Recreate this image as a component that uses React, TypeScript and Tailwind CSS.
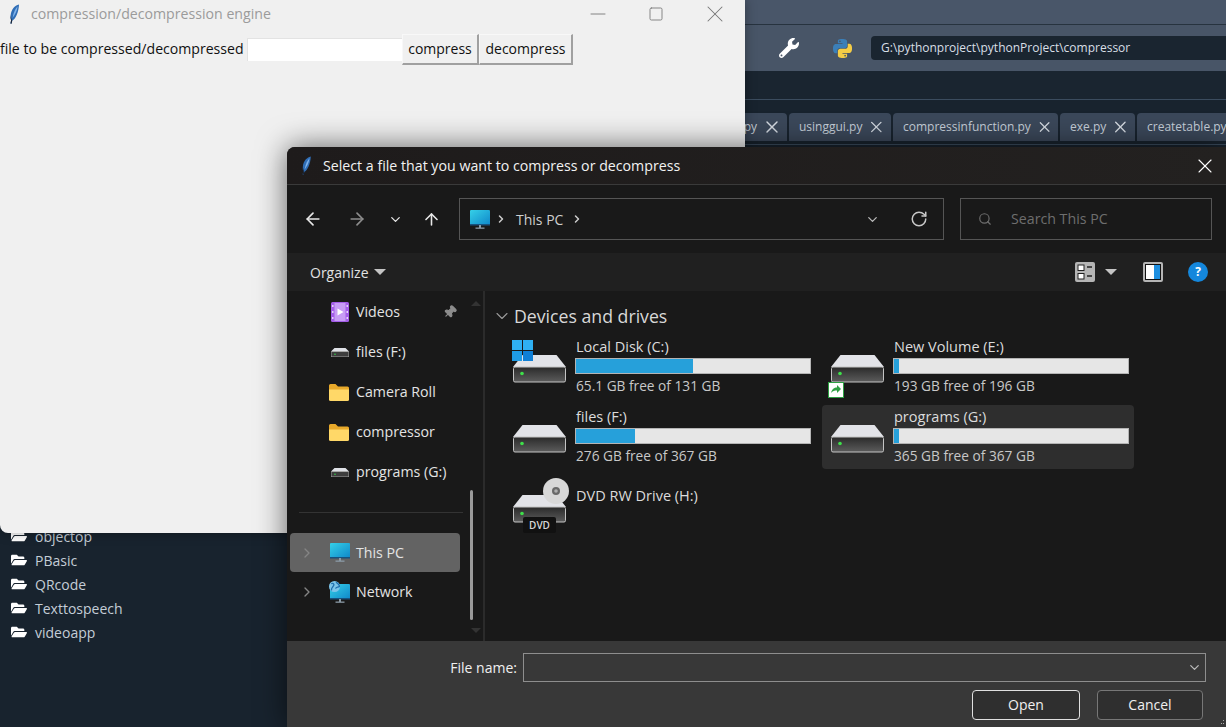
import { ArrowLeft, ArrowRight, ArrowUp, ChevronDown, ChevronRight, Minus, Pin, RotateCw, Search, Square, X } from "lucide-react";
import { FaFolderOpen, FaWrench } from "react-icons/fa";

const tabs = [
    { name: "main.py", width: "w-[147px] justify-end" },
    { name: "usinggui.py", width: "w-[102px] justify-between" },
    { name: "compressinfunction.py", width: "w-[165px] justify-between" },
    { name: "exe.py", width: "w-[75px] justify-between" },
];

const folders = ["objectop", "PBasic", "QRcode", "Texttospeech", "videoapp"];

const drives = [
    { name: "Local Disk (C:)", free: "65.1 GB free of 131 GB", used: 50, badge: "windows" },
    { name: "New Volume (E:)", free: "193 GB free of 196 GB", used: 2, badge: "share" },
    { name: "files (F:)", free: "276 GB free of 367 GB", used: 25 },
    { name: "programs (G:)", free: "365 GB free of 367 GB", used: 2, selected: true },
    { name: "DVD RW Drive (H:)", badge: "dvd" },
];

const Feather = ({ className }: { className: string }) => (
    <svg viewBox="0 0 12 22" className={className}>
        <path d="M11 0.5C6 1.5 2.5 6 1.8 12c-.3 2.500 0 4.500.5 6L1.500 21.500l1.200.3.8-3.300C7.500 16 10.500 9 11 .5z" fill="#2f6db5" />
        <path d="M9.500 2.500C7 5 5 9 3.800 15.500 6.500 12 8.800 8 9.500 2.500z" fill="#7fb2ea" />
        <path d="M1.800 12c-.3 2.500 0 4.500.5 6l-.8 3.500 1.200.3.8-3.300c-1-2-1.500-4-1.700-6.500z" fill="#1b2230" />
    </svg>
);

const PythonLogo = () => (
    <svg viewBox="0 0 24 24" className="w-[19px] h-[19px]">
        <path fill="#3b7fb8" d="M14.25.18l.9.2.73.26.59.3.45.32.34.34.25.34.16.33.1.3.04.26.02.2-.01.13V8.5l-.05.63-.13.55-.21.46-.26.38-.3.31-.33.25-.35.19-.35.14-.33.1-.3.07-.26.04-.21.02H8.77l-.69.05-.59.14-.5.22-.41.27-.33.32-.27.35-.2.36-.15.37-.1.35-.07.32-.04.27-.02.21v3.06H3.17l-.21-.03-.28-.07-.32-.12-.35-.18-.36-.26-.36-.36-.35-.46-.32-.59-.28-.73-.21-.88-.14-1.05-.05-1.23.06-1.22.16-1.04.24-.87.32-.71.36-.57.4-.44.42-.33.42-.24.4-.16.36-.1.32-.05.24-.01h.16l.06.01h8.16v-.83H6.18l-.01-2.75-.02-.37.05-.34.11-.31.17-.28.25-.26.31-.23.38-.2.44-.18.51-.15.58-.12.64-.1.71-.06.77-.04.84-.02 1.27.05zm-6.3 1.98l-.23.33-.08.41.08.41.23.34.33.22.41.09.41-.09.33-.22.23-.34.08-.41-.08-.41-.23-.33-.33-.22-.41-.09-.41.09z" />
        <path fill="#f5cd46" d="M21.04 6.11l.28.06.32.12.35.18.36.27.36.35.35.47.32.59.28.73.21.88.14 1.04.05 1.23-.06 1.23-.16 1.04-.24.86-.32.71-.36.57-.4.45-.42.33-.42.24-.4.16-.36.09-.32.05-.24.02-.16-.01h-8.22v.82h5.84l.01 2.76.02.36-.05.34-.11.31-.17.29-.25.25-.31.24-.38.2-.44.17-.51.15-.58.13-.64.09-.71.07-.77.04-.84.01-1.27-.04-1.07-.14-.9-.2-.73-.25-.59-.3-.45-.33-.34-.34-.25-.34-.16-.33-.1-.3-.04-.25-.02-.2.01-.13v-5.34l.05-.64.13-.54.21-.46.26-.38.3-.32.33-.24.35-.2.35-.14.33-.1.3-.06.26-.04.21-.02.13-.01h5.84l.69-.05.59-.14.5-.21.41-.28.33-.32.27-.35.2-.36.15-.36.1-.35.07-.32.04-.28.02-.21V6.07h2.09l.14.01zm-6.47 14.25l-.23.33-.08.41.08.41.23.33.33.23.41.08.41-.08.33-.23.23-.33.08-.41-.08-.41-.23-.33-.33-.23-.41-.08-.41.08z" />
    </svg>
);

const Monitor = ({ className }: { className: string }) => (
    <svg viewBox="0 0 20 19" className={className}>
        <defs>
            <linearGradient id="screen" x1="0" y1="0" x2="1" y2="1">
                <stop offset="0" stopColor="#35d0e8" />
                <stop offset="1" stopColor="#0f87c9" />
            </linearGradient>
        </defs>
        <rect x="0" y="0" width="20" height="15" rx="1" fill="url(#screen)" />
        <rect x="0" y="14" width="20" height="1.500" fill="#17527f" />
        <rect x="9" y="15" width="2" height="3" fill="#8a9aa6" />
        <rect x="5.500" y="17.500" width="9" height="1.300" fill="#8a9aa6" />
    </svg>
);

const SmallDrive = () => (
    <svg viewBox="0 0 18 9" className="w-[18px] h-[9px]">
        <path d="M3.500 0h11L18 3.500H0z" fill="#dfe1e6" />
        <rect x="0" y="3.500" width="18" height="5.500" rx="1" fill="#3d3d3d" stroke="#c8c8c8" strokeWidth=".7" />
        <circle cx="4" cy="6.200" r=".8" fill="#35d04a" />
    </svg>
);

const Folder = () => (
    <svg viewBox="0 0 20 17" className="w-5 h-[17px]">
        <path d="M0 1.500A1.500 1.500 0 0 1 1.500 0h5L9 2.500h9.500A1.500 1.500 0 0 1 20 4v3H0z" fill="#e8a92a" />
        <path d="M0 5.500h20v10a1.500 1.500 0 0 1-1.500 1.500h-17A1.500 1.500 0 0 1 0 15.500z" fill="#ffd868" />
    </svg>
);

const VideosIcon = () => (
    <svg viewBox="0 0 18 20" className="w-[18px] h-5">
        <rect width="18" height="20" rx="1.500" fill="#a45ee8" />
        <rect x="3.500" y="1" width="11" height="18" fill="#c79cf5" />
        <path d="M6.500 6.500l6 3.500-6 3.500z" fill="#fff" />
        <g fill="#e6d5fa">
            <rect x="1" y="3" width="1.500" height="2" />
            <rect x="1" y="9" width="1.500" height="2" />
            <rect x="1" y="15" width="1.500" height="2" />
            <rect x="15.500" y="3" width="1.500" height="2" />
            <rect x="15.500" y="9" width="1.500" height="2" />
            <rect x="15.500" y="15" width="1.500" height="2" />
        </g>
    </svg>
);

const NetworkIcon = () => (
    <div className="relative w-5 h-5 -ml-px">
        <Monitor className="absolute left-0 top-[2px] w-5 h-[19px]" />
        <svg viewBox="0 0 10 10" className="absolute left-[-1px] top-[-1px] w-[11px] h-[11px]">
            <circle cx="5" cy="5" r="5" fill="#7cc4ea" />
            <path d="M2 2.500c2-1 3 .5 2 2S1.500 7 2.500 8.500M6.500 1c1 1.500 3 2 3 4-1.500 1-3 0-3.500 2" fill="none" stroke="#1f6fae" strokeWidth="1.200" />
        </svg>
    </div>
);

const DriveIcon = ({ badge, id }: { badge?: string; id: number }) => (
    <svg viewBox="0 0 60 64" className="w-[60px] h-16 shrink-0">
        <defs>
            <linearGradient id={`body${id}`} x1="0" y1="0" x2="0" y2="1">
                <stop offset="0" stopColor="#2a2a2a" />
                <stop offset="1" stopColor="#5c5c5c" />
            </linearGradient>
        </defs>
        <path d="M12.500 20h34L56 32H3z" fill="#e2e3e8" />
        <rect x="3.500" y="32" width="52" height="15" rx="1.500" fill={`url(#body${id})`} stroke="#c4c4c4" />
        <circle cx="12" cy="38.500" r="1.800" fill="#3ee04a" />
        {badge === "windows" && (
            <g fill="#1e9be6">
                <rect x="2" y="5" width="10" height="10" fill="#2fb0f2" />
                <rect x="13" y="5" width="10" height="10" fill="#2fb0f2" />
                <rect x="2" y="16" width="10" height="10" />
                <rect x="13" y="16" width="10" height="10" fill="#0f7fd6" />
            </g>
        )}
        {badge === "share" && (
            <g>
                <rect x="0.500" y="47.500" width="15" height="15" fill="#fff" stroke="#2ea043" />
                <path d="M3 58c1-4 3-5.500 6-5.500V50l4 4-4 4v-2.500c-2.500 0-4.500.5-6 2.500z" fill="#2ea043" />
            </g>
        )}
        {badge === "dvd" && (
            <g>
                <circle cx="46" cy="16" r="13" fill="#d8d8d8" />
                <circle cx="46" cy="16" r="4" fill="#6a6a6a" />
                <circle cx="46" cy="16" r="1.800" fill="#b0b0b0" />
                <rect x="13" y="42" width="33" height="16" rx="2" fill="#111" />
                <text x="29.500" y="53.500" textAnchor="middle" fontSize="10" fontFamily="Open Sans, sans-serif" fontWeight="600" fill="#d8d8d8">DVD</text>
            </g>
        )}
    </svg>
);

const SideRow = ({ label, icon, pin, chevron, active }: { label: string; icon: React.ReactNode; pin?: boolean; chevron?: boolean; active?: boolean }) => (
    <div className={`flex items-center w-[170px] rounded-sm ${active ? "bg-[#636363] h-[39px]" : "h-10"}`}>
        <div className="w-[40px] shrink-0 flex justify-end pr-[15px]">
            {chevron && <ChevronRight size={16} className="text-[#858585]" />}
        </div>
        <div className="w-[26px] shrink-0 flex pl-px">{icon}</div>
        <span className="text-[14.2px] text-[#e4e4e4]">{label}</span>
        {pin && <Pin size={14} className="ml-auto mr-[3px] text-[#8d8d8d] rotate-45 fill-[#8d8d8d]" />}
    </div>
);

export default function App() {
    return (
        <div className="relative w-[1226px] h-[727px] overflow-hidden bg-[#18232e] font-['Open_Sans',sans-serif]">
            {/* IDE behind the windows */}
            <div className="flex flex-col">
                <div className="h-6 bg-[#495669] border-b border-[#27333f] box-content" />
                <div className="h-[46px] bg-[#485567] flex items-center pl-[779px]">
                    <FaWrench size={20} className="text-white" />
                    <div className="ml-[34px]"><PythonLogo /></div>
                    <div className="ml-[19px] flex-1 h-6 bg-[#1a2530] rounded-l flex items-center pl-[10px] text-[12px] text-[#d8dfe6]">
                        G:\pythonproject\pythonProject\compressor
                    </div>
                </div>
                <div className="h-[28px] bg-[#1a2530] border-b border-[#3b4c5e] box-content" />
                <div className="pt-[13px] flex gap-[2px] pl-[640px] whitespace-nowrap">
                    {tabs.map((t) => (
                        <div key={t.name} className={`h-7 rounded-t bg-[#3b485a] flex items-center gap-[5px] pl-[10px] pr-[5px] text-[12px] text-[#c6cfd9] shrink-0 ${t.width}`}>
                            <span>{t.name}</span>
                            <X size={20} strokeWidth={1.700} className="text-[#d5dbe2]" />
                        </div>
                    ))}
                    <div className="h-7 rounded-t bg-[#3b485a] flex items-center pl-[10px] text-[12px] text-[#c6cfd9] w-[120px] shrink-0">createtable.py</div>
                </div>
                <div className="mt-[3px] h-px bg-[#3b4c5e]" />
                <div className="pt-[379px] pl-[11px]">
                    {folders.map((f) => (
                        <div key={f} className="h-6 flex items-center gap-2 text-[14px] text-[#c4cdd7]">
                            <FaFolderOpen size={16} className="text-white" />
                            <span>{f}</span>
                        </div>
                    ))}
                </div>
            </div>

            {/* tkinter window */}
            <div className="absolute left-0 top-0 w-[745px] h-[533px] bg-[#f0f0f0] rounded-bl-lg shadow-[0_0_12px_rgba(0,0,0,0.35)]">
                <div className="h-[28px] flex items-center">
                    <Feather className="ml-[9px] w-[11px] h-5" />
                    <span className="ml-[11px] -mt-px text-[14.15px] text-[#9b9b9b]">compression/decompression engine</span>
                    <Minus size={24} strokeWidth={0.900} className="ml-auto text-[#777]" />
                    <Square size={16} strokeWidth={1.300} className="ml-[38px] text-[#777]" />
                    <X size={28} strokeWidth={0.900} className="ml-[37px] mr-[16px] text-[#777]" />
                </div>
                <div className="mt-[6px] flex items-center whitespace-nowrap text-[14px] text-[#111]">
                    <span className="w-[247px] -mt-px text-[14.1px]">file to be compressed/decompressed</span>
                    <div className="w-[155px] h-[23px] bg-white border-t border-l border-[#e3e3e3]" />
                    <button className="w-[77px] h-[31px] pb-px bg-[#f0f0f0] border border-[#f8f8f8] border-r-2 border-b-2 border-r-[#a0a0a0] border-b-[#a0a0a0]">compress</button>
                    <button className="w-[94px] h-[31px] pb-px bg-[#f0f0f0] border border-[#f8f8f8] border-r-2 border-b-2 border-r-[#a0a0a0] border-b-[#a0a0a0]">decompress</button>
                </div>
            </div>

            {/* file picker dialog */}
            <div className="absolute left-[287px] top-[147px] w-[939px] h-[580px] rounded-tl-lg overflow-hidden bg-[#191919] flex flex-col shadow-[0_0_30px_rgba(0,0,0,0.6)]">
                <div className="h-[38px] shrink-0 bg-gradient-to-r from-[#1e1b1b] to-[#232120] border-b border-[#3a3a3a] flex items-center pl-[14px] pr-[9px]">
                    <Feather className="w-[11px] h-[19px]" />
                    <span className="ml-[11px] text-[14.2px] text-[#f2f2f2]">Select a file that you want to compress or decompress</span>
                    <X size={24} strokeWidth={1.100} className="ml-auto text-white" />
                </div>

                <div className="h-[68px] shrink-0 flex items-center text-[#e8e8e8]">
                    <ArrowLeft size={20} className="ml-[16px]" />
                    <ArrowRight size={20} className="ml-[24px] text-[#8d8d8d]" />
                    <ChevronDown size={15} className="ml-[21px]" />
                    <ArrowUp size={19} className="ml-[19px]" />
                    <div className="ml-[18px] w-[485px] h-[42px] border border-[#555] flex items-center pl-[10px]">
                        <Monitor className="w-5 h-[19px]" />
                        <ChevronRight size={12} strokeWidth={3} className="ml-[5px] text-[#ccc]" />
                        <span className="ml-[9px] text-[14px] text-[#cfcfcf]">This PC</span>
                        <ChevronRight size={12} strokeWidth={3} className="ml-[8px] text-[#ccc]" />
                        <ChevronDown size={15} className="ml-auto text-[#bbb]" />
                        <RotateCw size={18} className="ml-[30px] mr-[15px] text-[#c8c8c8]" />
                    </div>
                    <div className="ml-[16px] w-[252px] h-[42px] border border-[#555] flex items-center pl-[17px]">
                        <Search size={14} className="text-[#6e6e6e]" />
                        <span className="ml-[19px] text-[14.2px] text-[#6e6e6e]">Search This PC</span>
                    </div>
                </div>

                <div className="h-[38px] shrink-0 bg-[#202020] flex items-center pl-[23px] pr-[18px]">
                    <span className="text-[14px] text-[#e2e2e2]">Organize</span>
                    <svg viewBox="0 0 12 6" className="ml-[5px] w-3 h-[6px]"><path d="M0 0h12L6 6z" fill="#c4c4c4" /></svg>
                    <svg viewBox="0 0 20 20" className="ml-auto w-5 h-5">
                        <rect width="20" height="20" rx="2" fill="#b5b5b5" />
                        <rect x="3" y="3" width="6" height="5.500" fill="#fff" stroke="#222" />
                        <rect x="3" y="11.500" width="6" height="5.500" fill="#fff" stroke="#222" />
                        <path d="M12 5h5M12 14h5" stroke="#222" strokeWidth="1.500" />
                    </svg>
                    <svg viewBox="0 0 12 6" className="ml-[10px] w-3 h-[6px]"><path d="M0 0h12L6 6z" fill="#c4c4c4" /></svg>
                    <svg viewBox="0 0 20 20" className="ml-[26px] w-5 h-5">
                        <rect width="20" height="20" rx="2" fill="#b5b5b5" />
                        <rect x="2" y="2" width="16" height="16" fill="#111" />
                        <rect x="3" y="3" width="8" height="14" fill="#fff" />
                        <rect x="11" y="3" width="6" height="14" fill="#1e8fe0" />
                    </svg>
                    <div className="ml-[25px] w-5 h-5 rounded-full bg-[#1487dc] text-white text-[12px] font-bold flex items-center justify-center">?</div>
                </div>

                <div className="flex-1 flex min-h-0">
                    <div className="relative w-[198px] shrink-0 border-r-2 border-[#2b2b2b] pl-[3px] pt-px">
                        <SideRow label="Videos" icon={<VideosIcon />} pin />
                        <SideRow label="files (F:)" icon={<SmallDrive />} />
                        <SideRow label="Camera Roll" icon={<div className="-ml-[2px]"><Folder /></div>} />
                        <SideRow label="compressor" icon={<div className="-ml-[2px]"><Folder /></div>} />
                        <SideRow label="programs (G:)" icon={<SmallDrive />} />
                        <div className="mt-[20px] mb-[20px] ml-[9px] w-[164px] h-px bg-[#333]" />
                        <SideRow label="This PC" icon={<Monitor className="-ml-px w-5 h-[19px]" />} chevron active />
                        <SideRow label="Network" icon={<NetworkIcon />} chevron />
                        {/* scrollbar */}
                        <div className="absolute left-[184px] top-[10px] w-0 h-0 border-x-[5px] border-x-transparent border-b-[5px] border-b-[#333]" />
                        <div className="absolute left-[183px] top-[199px] w-[3px] h-[130px] rounded bg-[#9a9a9a]" />
                        <div className="absolute left-[184px] top-[337px] w-0 h-0 border-x-[5px] border-x-transparent border-t-[5px] border-t-[#333]" />
                    </div>

                    <div className="flex-1 pl-[19px] pt-[12px]">
                        <div className="flex items-center h-[26px] text-[#d8d8d8]">
                            <ChevronDown size={20} strokeWidth={1.300} className="-ml-[12px] text-[#9a9a9a]" />
                            <span className="ml-[2px] text-[17.700px]">Devices and drives</span>
                        </div>
                        <div className="mt-[6px] grid grid-cols-[312px_312px] gap-[6px]">
                            {drives.map((d, i) => (
                                <div key={d.name} className={`relative h-16 flex pl-[6px] rounded-sm ${d.selected ? "bg-[#2e2e2e]" : ""}`}>
                                    <DriveIcon badge={d.badge} id={i} />
                                    <div className={`ml-[5px] text-[#dcdcdc] leading-[19px] ${d.free ? "pt-[2px]" : "pt-[11px]"}`}>
                                        <div className="ml-px text-[14.500px]">{d.name}</div>
                                        {d.free && (
                                            <>
                                                <div className="w-[236px] h-4 mt-[2px] bg-[#e6e6e6] border border-[#b4b4b4]">
                                                    <div className="h-full bg-[#26a0da]" style={{ width: `${d.used}%` }} />
                                                </div>
                                                <div className="ml-px mt-[2px] text-[13.700px] text-[#c8c8c8]">{d.free}</div>
                                            </>
                                        )}
                                    </div>
                                </div>
                            ))}
                        </div>
                    </div>
                </div>

                <div className="relative h-[86px] shrink-0 bg-[#383838] pt-3 text-[14px] text-[#f0f0f0]">
                    <div className="flex items-center justify-end pr-5">
                        <span>File name:</span>
                        <div className="ml-[6px] w-[683px] h-[29px] border border-[#8e8e8e] flex items-center justify-end pr-[3px]">
                            <ChevronDown size={15} className="text-[#bbb]" />
                        </div>
                    </div>
                    <div className="mt-2 flex justify-end gap-[17px] pr-[23px]">
                        <div className="w-[108px] h-[30px] pb-px rounded border border-[#e0e0e0] bg-[#2f2f2f] flex items-center justify-center">Open</div>
                        <div className="w-[106px] h-[30px] pb-px rounded border border-[#777] bg-[#2f2f2f] flex items-center justify-center">Cancel</div>
                    </div>
                    {/* resize grip */}
                    <svg viewBox="0 0 6 6" className="absolute right-px bottom-px w-[6px] h-[6px]">
                        <rect x="4" y="0" width="1" height="1" fill="#aaa" />
                        <rect x="2" y="3" width="1" height="1" fill="#aaa" />
                        <rect x="4" y="3" width="1" height="1" fill="#aaa" />
                    </svg>
                </div>
            </div>
        </div>
    );
}
